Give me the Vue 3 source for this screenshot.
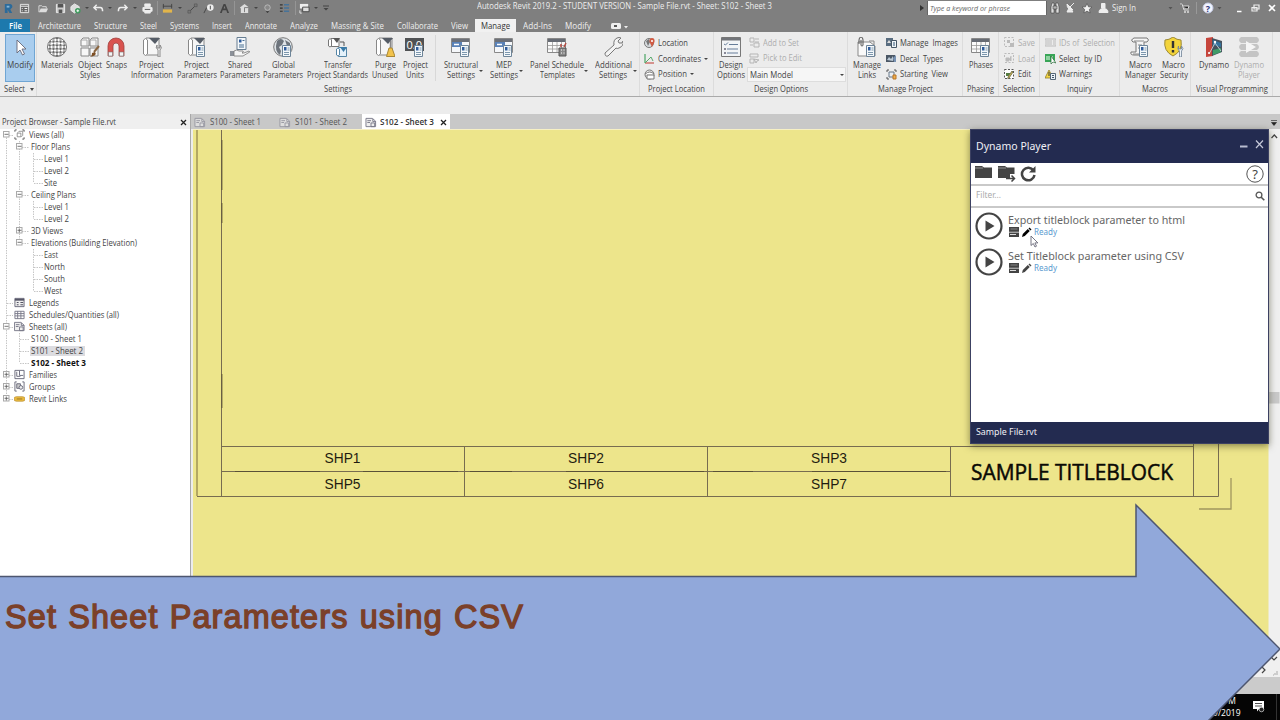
<script setup>
// Condenses or widens a label horizontally so that it fills a given width.
const vFit = {
  mounted(el, { value }) {
    el.style.display = 'inline-block'
    const natural = el.getBoundingClientRect().width
    el.style.width = natural + 'px'
    el.style.marginRight = value - natural + 'px'
    el.style.transform = `scaleX(${value / natural})`
  },
}

const doc = '<path d="M9.500 8.500h8v11h-8z" fill="#f4f8fb" stroke="#6d8498"/><path d="M11 10h2.500v3.500H11z" fill="#2f5c9c"/><path d="M14.500 11h2M14.500 13h2M11 15.500h5M11 17.500h5" stroke="#5d7d99" stroke-width=".8"/>'
const roll = '<path d="M4 1h13v17H4z" fill="#f6f6f6" stroke="#888"/><path d="M1.500 3q2-3 4 0v14q-2 3-4 0z" fill="#fff" stroke="#888"/><path d="M7 1h11l-5 6z" fill="#555c66"/>'
const windowIcon = '<path d="M.5 1.500h18v14H.5z" fill="#f5f7fa" stroke="#888"/><path d="M1 2h17v3H1z" fill="#6c7078"/><path d="M1 5h10v5H1z" fill="#5a82b8"/><path d="M3 7.500h5" stroke="#fff" stroke-width="1.500"/>'
const tableIcon = '<path d="M.5 1.500h18v14H.5z" fill="#fafafa" stroke="#888"/><path d="M1 2h17v3H1z" fill="#666b74"/><path d="M1 8.500h17M1 12h17M5.500 5v10M10 5v10M14.500 5v10" stroke="#999" stroke-width=".8"/>'
const big = {
  modify: '<path d="M7 3v13l3-3 2.500 5 2-1-2.500-5h4z" fill="#fff" stroke="#667" stroke-width=".9"/>',
  materials: '<defs><pattern id="ck" width="5" height="5" patternUnits="userSpaceOnUse" patternTransform="rotate(45 10 10)"><rect width="5" height="5" fill="#fff"/><path d="M0 0h2.500v2.500H0zM2.500 2.500H5V5H2.500z" fill="#6b6b6b"/></pattern></defs><circle cx="10" cy="10" r="9.500" fill="url(#ck)" stroke="#777"/><path d="M3 8q6-5 14 0" stroke="#fff" fill="none" opacity=".5"/>',
  object: '<path d="M1 3l2-2h6v8H1zM10 3l2-2h6v8h-8zM1 11h8v8H1zM10 11h8v8h-8z" fill="#f7f7f7" stroke="#888"/><path d="M1 3h6v6M10 3h6v6" fill="none" stroke="#aaa"/><path d="M19 9l-5 6" stroke="#8a6540" stroke-width="2"/><path d="M9 20q3 0 3-4l3-1q3 4-6 5z" fill="#7c4e24"/>',
  snaps: '<path d="M2 19V9a8 8 0 0 1 16 0v10h-5V9a3 3 0 0 0-6 0v10z" fill="#d9534f" stroke="#9f4440" stroke-width=".8"/><path d="M2.500 15h4v4h-4zM13.500 15h4v4h-4z" fill="#f4f4f4" stroke="#777" stroke-width=".6"/>',
  info: roll + '<path d="M16 20v-7q-3-2-1-5v3h3V8q3 3 0 5v7z" fill="#eee" stroke="#777" stroke-width=".8"/>',
  params: roll + doc,
  shared: '<path d="M7 .5h9v12H7z" fill="#f4f8fb" stroke="#667d92"/><path d="M9 2.500h2.500v3H9z" fill="#2f5c9c"/><path d="M12.500 3.500h2M9 8h5M9 10h5" stroke="#345d85" stroke-width=".9"/><path d="M0 14h4v5H0z" fill="#8c9199"/><path d="M4 14q3-2 5 0h4q1 1-1 2h2l5-2q2 1-1 2l-5 3H4z" fill="#f5f5f5" stroke="#777" stroke-width=".8"/>',
  global: '<circle cx="10" cy="10" r="9.300" fill="#dfe4e8" stroke="#777"/><path d="M4 4q4-4 7 0l-2 4-3 2 2 4-1 4q-6-4-3-14zM12 3l5 3v6l-3-3z" fill="#6d747c"/>' + doc,
  transfer: '<path d="M3 1.500h8v8H3z" fill="#fff" stroke="#777"/><path d="M5 1h7l-3 5z" fill="#555"/><path d="M12 5h4v4" fill="none" stroke="#555"/><path d="M10.500 10.500h8v9h-8z" fill="#e4f1fa" stroke="#5485a6"/><path d="M12 10h7l-3.500 5z" fill="#3b7ba8"/><path d="M8.500 12q1.500-2 3 0v6q-1.500 2-3 0z" fill="#fff" stroke="#5485a6"/><path d="M.5 3q1.500-3 3 0v6q-1.500 2-3 0z" fill="#fff" stroke="#777"/>',
  purge: roll + '<path d="M15.500 4v8" stroke="#888" stroke-width="1.500"/><path d="M14 11h3l3 8.500h-8.500z" fill="#f2c34c" stroke="#a88735"/>',
  units: '<path d="M0 1h19v13H0z" fill="#505254"/><text x="1.500" y="11.500" font-size="11" fill="#fff" font-family="Open Sans,sans-serif">0.0</text>' + doc,
  structural: windowIcon + doc,
  mep: windowIcon + doc,
  panel: tableIcon + '<path d="M12 11h7v8h-7z" fill="#888" stroke="#555"/><path d="M14 10V7M17 10l2-4" stroke="#b64b42" stroke-width="1.500"/><path d="M14 13h1M16.500 13h1M14 16h1M16.500 16h1" stroke="#fff"/>',
  wrench: '<path d="M2 16L11 8q-1-5 3-7 2-1 4 0l-3 3 1 2 3 0 1-2q1 5-4 7-2 1-3 0L5 19q-3 1-3-3z" fill="#f3f3f3" stroke="#777"/>',
  options: '<path d="M.5.5h19v19H.5z" fill="#f2f4f6" stroke="#777"/><path d="M1 1h18v2.500H1z" fill="#72757a"/><path d="M3 7l1.500 1L7 5.500M8 7.500h9M6 12h11M6 16h11" stroke="#667d99" fill="none"/><circle cx="4" cy="12" r="1" fill="#667"/><circle cx="4" cy="16" r="1" fill="#667"/>',
  links: '<path d="M1 5h12l5 4v10H1z" fill="#fafafa" stroke="#888"/><path d="M2 7V3q0-3 2-3t2 3v5q0 1-1 1t-1-1V3" fill="none" stroke="#555"/><path d="M12 4h5v5" fill="none" stroke="#888"/>' + doc,
  phases: tableIcon + doc,
  macro: '<path d="M4 1h13q3 2 0 4h-3v13H4q-4 0-3-3h5V5H3q-3-2 1-4z" fill="#f5f5f5" stroke="#777"/><path d="M4 4h10M8 8h4M8 11h4M3 17h9" stroke="#888"/>' + doc,
  security: '<path d="M9 0q4 3 8 3 2 11-8 16Q-1 14 1 3q4 0 8-3z" fill="#f3d43b" stroke="#9d8a38"/><path d="M9 4v7M9 13v2.500" stroke="#333" stroke-width="2.400"/><path d="M15.500 20v-6q-3-2-1-5v3h3V9q3 3 0 5v6z" fill="#edf3f8" stroke="#6f8295" stroke-width=".8"/>',
  dynamo: '<path d="M2 1l7-1v19l-7 1z" fill="#c6453c"/><path d="M8 1l10 3v11L8 19z" fill="#46525e"/><path d="M9 13l8-2v4l-8 3z" fill="#3f9b67"/><path d="M9 3l8 3v4l-8-2z" fill="#34719c"/><path d="M5 17L11 6l6 8" fill="none" stroke="#d6dee4" stroke-width=".8"/><circle cx="11" cy="5" r="1.200" fill="#fff"/><circle cx="5" cy="16" r="1" fill="#fff"/>',
  player: '<path d="M2 0h16q4 3 0 6H2q-4-3 0-6zM2 7h16q4 3 0 6H2q-4-3 0-6zM2 14h16q4 3 0 6H2q-4-3 0-6z" fill="#c4c4c4"/><path d="M7 4l10 6-10 6z" fill="#f5f5f5"/>',
}

const small = {
  location: '<circle cx="5" cy="6" r="4.500" fill="#d9dde0" stroke="#777"/><path d="M2 4l3-2 1 3-2 4z" fill="#777"/><path d="M8 10L5.500 5q-.5-4 2.500-4t2.500 4z" fill="#d05b43"/><circle cx="8" cy="4" r="1" fill="#fff"/>',
  coordinates: '<path d="M1 1v9" stroke="#4aa564" stroke-width="1.200"/><path d="M1 10h9" stroke="#c7574e" stroke-width="1.200"/><path d="M1 10l6-6M7 4l2 4" stroke="#58a86b" fill="none"/>',
  position: '<circle cx="5.500" cy="5.500" r="4.500" fill="#eee" stroke="#777"/><path d="M1 5q5-4 9 0M3 10V6h7v4z" fill="#fff" stroke="#777"/>',
  add: '<path d="M1 1h4v4H1zM6 2h4M6 5h4M5 6h5v4H5zM1 8h3" fill="none" stroke="#b5b5b5"/>',
  pick: '<path d="M1 1h8v3H1zM1 6h4v4H1zM5 6l5 1-2 1-1 2z" fill="none" stroke="#b5b5b5"/>',
  images: '<path d="M0 1h7v8H0z" fill="#596d80"/><path d="M1 6l2-3 2 3z" fill="#ddd"/><path d="M5.500 3.500h5v7h-5z" fill="#eef4f8" stroke="#456"/><path d="M7 6h2M7 8h2" stroke="#357"/>',
  decal: '<path d="M0 2h9v7H0z" fill="#4b5765"/><path d="M1 7l2-3 2 2 2-3v5z" fill="#bac8d5"/><path d="M7 5l3-3v7H8z" fill="#7892b3"/>',
  starting: '<path d="M1 3V1h2M8 1h2v2M1 8v2h2" fill="none" stroke="#555"/><path d="M3 3h5v5H3z" fill="#e9eef3" stroke="#678"/><path d="M7 6h3v4H7z" fill="#efb04e" stroke="#b77226"/>',
  save: '<path d="M.5.500h9v9h-9z" fill="none" stroke="#bbb" stroke-dasharray="2 1.500"/><path d="M3 3h3v3H3zM6 6h4v4H6z" fill="#bbb"/>',
  load: '<path d="M.5 4V.5h9v9h-9" fill="none" stroke="#bbb" stroke-dasharray="2 1.500"/><path d="M2 5h3v3H2zM7 3v5l-2-2" fill="#bbb" stroke="#bbb"/>',
  edit: '<path d="M.5.500h9v9h-9z" fill="#fff" stroke="#555" stroke-dasharray="2 1.500"/><path d="M2 4h4v3H2z" fill="#567d43"/><path d="M9 3L5 9l-1 1v-2l4-6z" fill="#e5c342" stroke="#775"/>',
  ids: '<path d="M0 2h11v7H0zM2 3v5M4 3v5M6 3v5M9 3v5" fill="none" stroke="#bbb"/>',
  select: '<path d="M0 1h10v8H0z" fill="#38a557"/><path d="M2 3v4M4 3v4M7 3v4" stroke="#e4ffe9"/><path d="M6 3v8l2-2 3 1z" fill="#fff" stroke="#286b3a" stroke-width=".7"/>',
  warnings: '<path d="M4 1L0 9h8z" fill="#f6d845" stroke="#8e7b29" stroke-width=".8"/><path d="M4 3v4" stroke="#333"/><path d="M5.500 4.500h5v6h-5z" fill="#eaf1f8" stroke="#567"/><path d="M7 6.500h2M7 8.500h2" stroke="#456"/>',
}

const quick = [
  { w: 16, s: '<path d="M2 1h6q3 1 2 4L8 7l2 4H7L5 7v4H2z" fill="#2c6b9b"/><path d="M4 3h3v2H4z" fill="#84b5d8"/>' },
  { w: 17, s: '<path d="M1.500 1.500h9v9h-9z" fill="#666" stroke="#eee"/><path d="M2 3.500h8M3 6h1M6 6h3M3 8.500h1M6 8.500h3" stroke="#fff"/>' },
  { w: 20, s: '<path d="M1 10V3h3l1 1h4v2" fill="none" stroke="#ddd"/><path d="M3 6h8l-2 4H1z" fill="#ddd"/>' },
  { w: 14, s: '<path d="M1.500 1.500h9v9h-9z" fill="#ccc" stroke="#eee"/><path d="M3 1h6v4H3zM4 7h4v4H4z" fill="#555"/>' },
  { w: 16, s: '<path d="M1 4l4-3 5 3v4L5 11 1 8z" fill="#ddd" stroke="#eee"/><circle cx="8.500" cy="8.500" r="3" fill="#3c985b"/><path d="M7 8.500h3M8.500 7v3" stroke="#fff"/>' },
  { w: 8, c: 1 },
  { w: 15, s: '<path d="M4 2L1 5l3 3M1 5h7q2.500 0 2.500 4" fill="none" stroke="#eee" stroke-width="1.600"/>' },
  { w: 8, c: 1 },
  { w: 17, s: '<path d="M8 2l3 3-3 3M11 5H4Q1.500 5 1.500 9" fill="none" stroke="#eee" stroke-width="1.600"/>' },
  { w: 8, c: 1 },
  { w: 17, s: '<path d="M3 1h6v3H3zM1 5h10v4H1zM3 8h6v3H3z" fill="#eee" stroke="#eee"/><path d="M3 7h6" stroke="#555"/>' },
  { w: 3, b: 1 },
  { w: 17, s: '<path d="M1.500 1v5M10.500 1v5M1 3.500h10" stroke="#444"/><path d="M1 7h10v3.500H1z" fill="#e2b54b"/>' },
  { w: 8, c: 1 },
  { w: 16, s: '<path d="M2 10L10 2" stroke="#444"/><path d="M1 8h3v3H1zM8 1h3v3H8z" fill="#777" stroke="#555" stroke-width=".7"/>' },
  { w: 16, s: '<path d="M1 11L4 5" stroke="#444"/><circle cx="8" cy="5" r="3.600" fill="#eee"/><path d="M8 3v4" stroke="#444"/>' },
  { w: 16, s: '<path d="M1 11L5 1h2l4 10H9L8 8H4l-1 3zM5 6h2L6 3z" fill="#444" fill-rule="evenodd"/>' },
  { w: 5, b: 1 },
  { w: 15, s: '<path d="M1 5l5-4 5 4-1 1v5H2V6z" fill="#ddd"/><path d="M6 5l5 0M6 5v5" stroke="#777"/>' },
  { w: 8, c: 1 },
  { w: 15, s: '<circle cx="6" cy="5" r="3" fill="#888" stroke="#bbb"/><path d="M6 11l-2-2h4z" fill="#333"/>' },
  { w: 18, s: '<path d="M1 2h3M1 5.500h3M1 9h3" stroke="#333" stroke-width="1.300"/><path d="M5.500 2h5.500M5.500 5.500h5.500M5.500 9h5.500" stroke="#46739a" stroke-width="1.600"/>' },
  { w: 4, b: 1 },
  { w: 15, s: '<path d="M1 1h9v5H1z" fill="#eee"/><path d="M4 4.500h7v5H4z" fill="#ddd" stroke="#444"/><path d="M1 8v3h2" fill="none" stroke="#eee"/>' },
  { w: 8, c: 1 },
  { w: 12, c: 2 },
]

const tabs = [['Architecture', 43], ['Structure', 33], ['Steel', 17], ['Systems', 29], ['Insert', 20], ['Annotate', 32], ['Analyze', 28], ['Massing & Site', 53], ['Collaborate', 41], ['View', 17], ['Manage', 29], ['Add-Ins', 29], ['Modify', 26]]

// Button: icon, box width, label lines as [text, width], optional flags.
// caret is the distance of the drop-down arrow from the box's right edge.
const B = (icon, w, lines, o = {}) => ({ icon, w, lines, ...o })
const panels = [
  { w: 37, title: ['Select', 21], cls: 'select', caret: 1, cols: [B('modify', 30, [['Modify', 26]], { cls: 'on' })] },
  { w: 603, title: ['Settings', 28], cols: [
    B('materials', 34, [['Materials', 32]]), B('object', 32, [['Object', 24], ['Styles', 20]]), B('snaps', 20, [['Snaps', 21]]),
    B('info', 51, [['Project', 25], ['Information', 42]]), B('params', 39, [['Project', 25], ['Parameters', 40]]),
    B('shared', 48, [['Shared', 24], ['Parameters', 40]]), B('global', 38, [['Global', 23], ['Parameters', 40]]),
    B('transfer', 71, [['Transfer', 28], ['Project Standards', 61]]), B('purge', 24, [['Purge', 21], ['Unused', 26]]),
    B('units', 36, [['Project', 25], ['Units', 18]]), { line: 1 },
    B('structural', 48, [['Structural', 34], ['Settings', 28]], { caret: 2 }), B('mep', 38, [['MEP', 16], ['Settings', 28]], { caret: 0 }),
    B('panel', 68, [['Panel Schedule', 54], ['Templates', 35]], { caret: 3 }), B('wrench', 44, [['Additional', 37], ['Settings', 28]], { caret: -2 }),
  ] },
  { w: 74, title: ['Project Location', 57], cols: [{ rows: [['location', 'Location', 30], ['coordinates', 'Coordinates', 43, 'c'], ['position', 'Position', 29, 'c']] }] },
  { w: 134, title: ['Design Options', 54], cols: [B('options', 28, [['Design', 24], ['Options', 28]]), { pad: 4, rows: [['add', 'Add to Set', 36, 'off'], ['pick', 'Pick to Edit', 39, 'off'], [null, 'Main Model', 43]] }] },
  { w: 115, title: ['Manage Project', 55], cols: [B('links', 32, [['Manage', 28], ['Links', 18]]), { pad: 3, rows: [['images', 'Manage  Images', 58], ['decal', 'Decal  Types', 43], ['starting', 'Starting  View', 48]] }] },
  { w: 36, title: ['Phasing', 27], cols: [B('phases', 30, [['Phases', 24]])] },
  { w: 41, title: ['Selection', 32], cols: [{ pad: 2, rows: [['save', 'Save', 17, 'off'], ['load', 'Load', 17, 'off'], ['edit', 'Edit', 13]] }] },
  { w: 80, title: ['Inquiry', 25], cols: [{ pad: 2, rows: [['ids', 'IDs of  Selection', 56, 'off'], ['select', 'Select  by ID', 43], ['warnings', 'Warnings', 33]] }] },
  { w: 71, title: ['Macros', 26], cols: [B('macro', 34, [['Macro', 23], ['Manager', 31]]), B('security', 33, [['Macro', 23], ['Security', 28]])] },
  { w: 82, title: ['Visual Programming', 72], cols: [B('dynamo', 40, [['Dynamo', 30]]), B('player', 29, [['Dynamo', 30], ['Player', 22]], { cls: 'off' })] },
]

const treeIcon = {
  views: '<path d="M1 3V1h2M9 1h2v2M1 9v2h2M9 11h2V9" fill="none" stroke="#555"/><path d="M3.500 4.500h4v4h-4zM4 4l1.500-1.500h4V7L8 8.500" fill="none" stroke="#777" stroke-width=".8"/>',
  legend: '<path d="M1 1.500h10v9H1z" fill="#eee" stroke="#667"/><path d="M1 3h10" stroke="#556" stroke-width="2"/><path d="M3 6h2M7 6h3M3 8.500h2M7 8.500h3" stroke="#445"/>',
  schedule: '<path d="M1 2.500h10v8H1zM1 5h10M1 7.500h10M4 2.500v8M7.500 2.500v8" fill="#fff" stroke="#778"/>',
  sheets: '<path d="M.5 1.500h7l3.500 3v6H.5z" fill="#eee" stroke="#778"/><path d="M2 4h4M2 6h3M6 6.500h4v4H6zM8 2v3h3" fill="none" stroke="#778"/>',
  families: '<path d="M1 1.500h10v9H1z" fill="#fff" stroke="#667"/><path d="M6 2v5h4M3 3v5h4" fill="none" stroke="#667"/>',
  groups: '<path d="M3 1H1v10h2M9 1h2v10H9" fill="none" stroke="#667"/><path d="M3 3h4v5H3z" fill="#ccc" stroke="#667"/><circle cx="7.500" cy="7" r="2" fill="#eee" stroke="#667"/>',
  links: '<path d="M2.500 4h7a2.500 2.500 0 0 1 0 5h-7a2.500 2.500 0 0 1 0-5z" fill="#e9b93f" stroke="#b58a2b" stroke-width=".7"/><path d="M3 6.500h6" stroke="#8d6b20" stroke-width=".9"/>',
}
// depth, label, width, expander, icon, class
const tree = [
  [0, 'Views (all)', 35, '-', 'views'], [1, 'Floor Plans', 39, '-'], [2, 'Level 1', 25], [2, 'Level 2', 25], [2, 'Site', 13],
  [1, 'Ceiling Plans', 45, '-'], [2, 'Level 1', 25], [2, 'Level 2', 25], [1, '3D Views', 32, '+'], [1, 'Elevations (Building Elevation)', 106, '-'],
  [2, 'East', 14], [2, 'North', 21], [2, 'South', 21], [2, 'West', 18], [0, 'Legends', 30, '', 'legend'],
  [0, 'Schedules/Quantities (all)', 90, '', 'schedule'], [0, 'Sheets (all)', 38, '-', 'sheets'],
  [1, 'S100 - Sheet 1', 51], [1, 'S101 - Sheet 2', 52, '', '', 'hl'], [1, 'S102 - Sheet 3', 55, '', '', 'bold'],
  [0, 'Families', 28, '+', 'families'], [0, 'Groups', 26, '+', 'groups'], [0, 'Revit Links', 38, '+', 'links'],
]

const docs = [['S100 - Sheet 1', 51], ['S101 - Sheet 2', 52], ['S102 - Sheet 3', 54]]
const scripts = [['Export titleblock parameter to html', 177], ['Set Titleblock parameter using CSV', 176]]
const cells = [['SHP1', 342.5, 463], ['SHP2', 586, 463], ['SHP3', 829, 463], ['SHP5', 342.5, 488.5], ['SHP6', 586, 488.5], ['SHP7', 829, 488.5]]
</script>

<template>
  <div class="screen">
    <header class="top">
      <div class="titlebar">
        <div class="quick">
          <span v-for="(q, i) in quick" :key="i" class="q" :style="{ width: q.w + 'px' }">
            <svg v-if="q.s" width="11" height="11" viewBox="0 0 12 12" v-html="q.s"></svg>
            <svg v-else-if="q.c === 2" width="6" height="6"><path d="M0 1h6" stroke="#444" /><path d="M.5 3h5L3 5.500z" fill="#444" /></svg>
            <i v-else-if="q.c" class="caret"></i>
            <i v-else class="qbar"></i>
          </span>
        </div>
        <div class="title"><span v-fit="295">Autodesk Revit 2019.2 - STUDENT VERSION - Sample File.rvt - Sheet: S102 - Sheet 3</span></div>
        <div class="account">
          <svg class="play" width="4" height="6"><path d="M0 0l4 3-4 3z" fill="#333" /></svg>
          <div class="search"><span v-fit="80">Type a keyword or phrase</span></div>
          <svg width="231" height="17" viewBox="1049 0 231 17">
            <path d="M1051 13V7l1-4h2v10zM1056 13V3h2l1 4v6zM1053 6h4v3h-4z" fill="#ddd" stroke="#333" stroke-width=".5" />
            <path d="M1067 4q0 6 6 6zM1069 8l-2 4h6l-3-4M1070 7l4-4" fill="#e8e8e8" stroke="#eee" />
            <path d="M1087 3.500l1.500 3.300 3.500.3-2.700 2.300.8 3.600-3.100-1.900-3.100 1.900.8-3.600-2.700-2.300 3.500-.3z" fill="#f1f1f1" stroke="#444" stroke-width=".6" />
            <path d="M1101.500 3.500h3.500v4.500h-3.500zM1099 12.500q0-4 4.500-4t4.500 4z" fill="#eee" stroke="#eee" />
            <path d="M1168.500 7h4l-2 2.500zM1217.500 7h4l-2 2.500z" fill="#555" />
            <path d="M1180 4h2l2 6h5M1183 6h6l-1 3h-4" fill="#222" stroke="#ddd" />
            <circle cx="1185" cy="12" r="1" fill="#ddd" /><circle cx="1188" cy="12" r="1" fill="#ddd" />
            <path d="M1196.500 2v12" stroke="#999" />
            <circle cx="1208" cy="8" r="5" fill="#f3f5ff" stroke="#c4cbe4" />
            <text x="1208" y="11.500" text-anchor="middle" font-size="9" font-weight="bold" fill="#303878">?</text>
            <path d="M1237 11.500h4.500" stroke="#fff" stroke-width="1.500" />
            <path d="M1254 5h5v4h-5zM1252 7.500h5v3.500h-5z" fill="#7f7f7f" stroke="#eee" stroke-width="1.200" />
            <path d="M1269 5l6 6M1275 5l-6 6" stroke="#fff" stroke-width="1.600" />
          </svg>
          <div class="signin"><span v-fit="24">Sign In</span></div>
        </div>
      </div>
      <nav class="tabs">
        <div class="file"><span v-fit="13">File</span></div>
        <div v-for="t in tabs" :key="t[0]" class="tab" :class="{ active: t[0] === 'Manage' }"><span v-fit="t[1]">{{ t[0] }}</span></div>
        <svg class="camera" width="18" height="8"><rect y="1" width="10" height="6" rx="1.500" fill="#eee" /><path d="M3 4h3" stroke="#555" stroke-width="2" /><path d="M13 4h4l-2 2.500z" fill="#eee" /></svg>
      </nav>
    </header>

    <section class="ribbon">
      <div v-for="p in panels" :key="p.title[0]" class="panel" :class="p.cls" :style="{ width: p.w + 'px' }">
        <div class="body">
          <template v-for="(c, i) in p.cols" :key="i">
            <i v-if="c.line" class="split"></i>
            <div v-else-if="c.rows" class="rows" :style="{ paddingLeft: (c.pad || 1) + 'px' }">
              <div v-for="r in c.rows" :key="r[1]" class="row" :class="[r[3], { combo: !r[0] }]">
                <svg v-if="r[0]" width="11" height="11" viewBox="0 0 11 11" v-html="small[r[0]]"></svg>
                <span v-fit="r[2]">{{ r[1] }}</span>
                <i v-if="!r[0] || r[3] === 'c'" class="caret"></i>
              </div>
            </div>
            <div v-else class="btn" :class="c.cls" :style="{ width: c.w + 'px' }">
              <svg width="20" height="20" viewBox="0 0 20 20" v-html="big[c.icon]"></svg>
              <span v-for="l in c.lines" :key="l[0]" v-fit="l[1]">{{ l[0] }}</span>
              <i v-if="c.caret !== undefined" class="caret" :style="{ right: c.caret + 'px' }"></i>
            </div>
          </template>
        </div>
        <div class="ptitle"><span v-fit="p.title[1]">{{ p.title[0] }}</span><i v-if="p.caret" class="caret"></i></div>
      </div>
    </section>
    <div class="optionbar"></div>

    <div class="work">
      <aside class="browser">
        <div class="bhead">
          <span v-fit="114">Project Browser - Sample File.rvt</span>
          <svg width="7" height="7"><path d="M1 1l5 5M6 1L1 6" stroke="#222" stroke-width="1.300" /></svg>
        </div>
        <div class="tree">
          <svg class="guides" width="60" height="275"><path d="M6.500 6v264M19.500 12v102M33.500 24v30M33.500 72v18M33.500 120v42M19.500 204v30M9 6.500h5M22 18.500h7M34 30.500h9M34 42.500h9M34 54.500h9M22 66.500h7M34 78.500h9M34 90.500h9M22 102.500h7M22 114.500h7M34 126.500h9M34 138.500h9M34 150.500h9M34 162.500h9M7 174.500h6M7 186.500h6M9 198.500h5M20 210.500h9M20 222.500h9M20 234.500h9M9 246.500h5M9 258.500h5M9 270.500h5" stroke="#c6c6c6" fill="none" stroke-dasharray="1.500 1" /></svg>
          <div v-for="(n, i) in tree" :key="i" class="node" :class="['d' + n[0], n[5]]">
            <span class="exp"><svg v-if="n[3]" width="7" height="7"><rect x=".5" y=".5" width="5.500" height="5.500" fill="#fff" stroke="#aaa" /><path :d="n[3] === '+' ? 'M1.500 3.300h4M3.300 1.500v4' : 'M1.500 3.300h4'" stroke="#555" stroke-width=".8" /></svg></span>
            <svg v-if="n[4]" class="nicon" width="11" height="11" viewBox="0 0 12 12" v-html="treeIcon[n[4]]"></svg>
            <div class="nlabel"><span v-fit="n[2]">{{ n[1] }}</span></div>
          </div>
        </div>
      </aside>

      <main class="view">
        <div class="doctabs">
          <div v-for="(d, i) in docs" :key="i" class="doctab" :class="{ current: i === 2 }">
            <svg width="12" height="11" viewBox="0 0 12 12" v-html="treeIcon.sheets"></svg>
            <span v-fit="d[1]">{{ d[0] }}</span>
            <svg v-if="i === 2" class="x" width="7" height="7"><path d="M1 1l5 5M6 1L1 6" stroke="#222" stroke-width="1.300" /></svg>
          </div>
          <svg class="more" width="6" height="6"><path d="M0 .5h6M.5 2.500h5l-2.500 3z" fill="#222" stroke="#222" stroke-width=".6" /></svg>
        </div>
        <svg class="sheet" width="1087" height="591" viewBox="193 129 1087 591">
          <path d="M193 129h1076v549H193z" fill="#ede58b" />
          <path d="M193 129.500h1076" stroke="#f7f0c4" />
          <path d="M197 130v366" stroke="#a99e5c" stroke-width="1.700" />
          <path d="M221.500 130v366M197 496.500h1021.500V440M221 446.500h973M221 471.500h730M464.500 446v50M707.500 446v50M950.500 446v50M1193.500 440v56" stroke="#776c50" fill="none" />
          <path d="M235 471.500h85M363 471.500h95M470 471.500h42M566 471.500h138M713 471.500h40M812 471.500h134M222 140v50M222 203v20M222 374v34" stroke="#4d462c" stroke-width=".7" />
          <path d="M1231 478v31h-32" stroke="#a0965f" fill="none" stroke-width="1.300" />
          <text v-for="c in cells" :key="c[0]" :x="c[1]" :y="c[2]" text-anchor="middle" class="shp" textLength="36" lengthAdjust="spacingAndGlyphs">{{ c[0] }}</text>
          <text x="971" y="480" class="sample" textLength="202" lengthAdjust="spacingAndGlyphs">SAMPLE TITLEBLOCK</text>
          <path d="M1268.500 129H1280v549h-11.500z" fill="#f0f0f0" />
          <path d="M1271.500 138l2.800-3 2.800 3" fill="none" stroke="#444" stroke-width="1.200" />
          <path d="M1269 392h10.500v11.500H1269z" fill="#c9c9c9" />
          <path d="M1225 642h55v36h-55z" fill="#f0f0f0" />
          <path d="M1271 657l3 3 3-3M1262 667l3 3-3 3" fill="none" stroke="#444" stroke-width="1.200" />
          <path d="M1273 675h1M1275 673v2M1277 671v4" stroke="#aaa" />
          <path d="M1160 677h120v17h-120z" fill="#cbcbcb" />
          <path d="M1160 694h120v26h-120z" fill="#050505" />
          <path d="M1276.500 694v26" stroke="#333" />
          <text x="1236" y="704" text-anchor="end" class="clock">PM</text>
          <text x="1240.500" y="716" text-anchor="end" class="clock">7/19/2019</text>
          <path d="M1253 701h11v8h-5l-2 2.500V709h-4z" fill="#fff" />
          <path d="M1255 703.500h7M1255 706h7" stroke="#222" stroke-width=".8" />
          <circle cx="1261.500" cy="709.500" r="2.300" fill="#222" stroke="#ddd" stroke-width=".7" />
        </svg>
      </main>
    </div>

    <section class="player">
      <div class="phead">
        <span v-fit="75">Dynamo Player</span>
        <svg width="25" height="12"><path d="M1 7.500h7.500" stroke="#b9bdd0" stroke-width="2" /><path d="M17 1.500l7 7.500M24 1.500L17 9" stroke="#c5c8d8" stroke-width="1.200" /></svg>
      </div>
      <div class="ptools">
        <svg width="62" height="17" viewBox="0 0 62 17">
          <path d="M0 1h7l2 1.500h8V13H0zM23 1h7l2 1.500h7.500V9H35v4H23z" fill="#444" />
          <path d="M0 3h8M23 3h8" stroke="#ccc" stroke-width=".6" />
          <path d="M31 13.500h8M36.500 10.500l3 3-3 3" fill="none" stroke="#444" stroke-width="1.500" />
          <path d="M58.500 5.500a6.300 6.300 0 1 0 1 4.500" fill="none" stroke="#444" stroke-width="2.500" /><path d="M60.500 1v6.500H54z" fill="#444" />
        </svg>
        <svg width="18" height="18"><circle cx="9" cy="9" r="8.200" fill="#fff" stroke="#555" /><text x="9" y="13.500" text-anchor="middle" font-size="13" fill="#444">?</text></svg>
      </div>
      <div class="pfilter">
        <span v-fit="25">Filter...</span>
        <svg width="10" height="10"><circle cx="4" cy="4" r="2.900" fill="none" stroke="#555" stroke-width="1.300" /><path d="M6 6l3.300 3.300" stroke="#555" stroke-width="1.600" /></svg>
      </div>
      <div class="plist">
        <div v-for="(s, i) in scripts" :key="i" class="script">
          <svg width="28" height="28"><circle cx="14" cy="14" r="12.500" fill="#fff" stroke="#444" stroke-width="2.200" /><path d="M10.500 8.500l9 5.500-9 5.500z" fill="#444" /></svg>
          <div class="stext">
            <span v-fit="s[1]" class="sname">{{ s[0] }}</span>
            <div class="sstat">
              <svg width="24" height="11"><path d="M1 0h10v4.800H1z" fill="#444" /><path d="M2.500 2h7" stroke="#999" stroke-width=".8" /><path d="M1 5.500h10v4.500H1z" fill="#444" /><path d="M2 7.500h6" stroke="#ddd" /><path d="M14 10l.8-3 5-5 2 2-5 5zM20.500 1.500l1-1 2 2-1 1z" :fill="i ? '#444' : '#000'" /></svg>
              <span v-fit="23">Ready</span>
            </div>
          </div>
        </div>
      </div>
      <div class="pfoot"><span v-fit="61">Sample File.rvt</span></div>
    </section>

    <svg class="pointer" width="9" height="13"><path d="M1 1v9.500l2.300-2 1.700 3.500 1.500-.8-1.600-3.300h3z" fill="#fff" stroke="#667" stroke-width=".9" /></svg>

    <div class="banner">
      <svg width="1280" height="218" viewBox="0 502 1280 218">
        <path d="M-3 576.500H1136V505L1280 649 1208 721H-3z" fill="#91a8da" stroke="#4d5670" stroke-width="1.500" />
      </svg>
      <div class="caption"><span v-fit="519">Set Sheet Parameters using CSV</span></div>
    </div>
  </div>
</template>

<style>
html, body { margin: 0; overflow: hidden; }
</style>

<style scoped>
.screen { position: relative; width: 1280px; height: 720px; overflow: hidden; background: #ececec; font: 8.6px/10px "Open Sans", "Noto Sans", sans-serif; color: #444; white-space: pre; }
.screen span { white-space: pre; transform-origin: 0 50%; flex: none; }
svg { display: block; flex: none; }
.caret { width: 0; height: 0; border: 2px solid transparent; border-top: 2.5px solid #444; border-bottom: 0; flex: none; }
.top { height: 32px; background: #7f7f7f; color: #eee; }
.titlebar { display: flex; height: 18px; position: relative; }
.quick { display: flex; align-items: center; height: 16px; width: 477px; }
.q { display: flex; justify-content: center; align-items: center; flex: none; }
.qbar { width: 1px; height: 14px; background: #959595; }
.title { flex: 1; line-height: 13px; }
.account { display: flex; align-items: flex-start; position: relative; }
.play { margin: 5px 3px 0 0; }
.search { width: 120px; height: 14px; margin-top: 1px; margin-right: 2px; background: #fff; color: #666; font-style: italic; font-size: 8px; line-height: 14px; box-sizing: border-box; padding-left: 2px; border: 1px solid #666; border-width: 0 1px; }
.signin { position: absolute; left: 192px; top: 3px; }
.tabs { display: flex; height: 14px; gap: 13px; align-items: stretch; line-height: 16px; }
.file { width: 30px; text-align: center; background: #1d79ad; margin-right: -5px; margin-top: 1px; line-height: 14px; color: #fff; font-weight: 600; }
.active { background: #f1f1f1; color: #333; margin: 1px -6px 0; padding: 0 6px; line-height: 14px; }
.camera { margin: 4px 0 0 7px; }
.ribbon { display: flex; height: 64px; background: #ececec; border-bottom: 1px solid #aaa; }
.panel { display: flex; flex-direction: column; flex: none; box-sizing: border-box; border-right: 1px solid #dcdcdc; }
.body { display: flex; height: 50px; padding: 3px 0 0 3px; box-sizing: border-box; }
.ptitle { display: flex; justify-content: center; align-items: center; gap: 5px; height: 14px; }
.select .body { padding: 2px 0 0 5px; }
.select .ptitle { justify-content: flex-start; padding-left: 4px; }
.select .ptitle .caret { border-width: 3px 2.5px 0; }
.btn { display: flex; flex-direction: column; align-items: center; position: relative; flex: none; padding-top: 2px; box-sizing: border-box; height: 47px; }
.btn > svg { margin-bottom: 3px; }
.btn > span { line-height: 10px; }
.btn .caret { position: absolute; top: 35px; }
.on { background: #a9cdee; border: 1px solid #6fa5d3; padding-top: 2px; height: 48px; width: 30px; }
.off { color: #adadad; }
.split { width: 1px; height: 46px; margin: 0 1.5px; background: #d8d8d8; }
.rows { display: flex; flex-direction: column; flex: 1; }
.row { display: flex; align-items: center; gap: 3px; height: 16px; }
.combo { background: #f6f6f6; border: 1px solid #ddd; height: 13px; margin-top: 1px; padding: 0 1px 0 2px; justify-content: space-between; margin-left: -2px; margin-right: 1px; }
.optionbar { height: 17px; background: #ececec; }
.work { display: flex; height: 606px; }
.browser { width: 190px; background: #fff; border-right: 1px solid #a9a9a9; }
.bhead { display: flex; justify-content: space-between; align-items: center; height: 15px; padding: 1px 3px 0 2px; box-sizing: border-box; background: #efefef; }
.tree { position: relative; }
.guides { position: absolute; left: 0; top: 0; }
.node { display: flex; align-items: center; height: 12px; position: relative; top: -.5px; color: #444; }
.exp { width: 7px; height: 7px; }
.d0 { padding-left: 3px; }
.d1 { padding-left: 16px; }
.d2 { padding-left: 28px; }
.nicon { margin: 0 4px; }
.nlabel { display: flex; }
.d1 .nlabel { margin-left: 8px; }
.d2 .nlabel { margin-left: 9px; }
.hl .nlabel { background: #dcdce0; box-shadow: -1px 0 #dcdce0, 2px 0 #dcdce0; }
.bold .nlabel { font-weight: 700; color: #111; }
.view { width: 1089px; }
.doctabs { display: flex; height: 15px; background: #c8c8c8; padding-left: 3px; align-items: stretch; }
.doctab { display: flex; align-items: center; width: 85px; gap: 4px; padding-top: 1px; box-sizing: border-box; color: #555; }
.doctab svg { opacity: .6; }
.doctab.current { background: #fff; width: 88px; margin-left: -2px; padding-left: 3px; font-weight: 600; color: #333; gap: 3px; }
.doctab.current svg { opacity: 1; }
.x { margin-left: 3px; }
.more { margin: 6px 3px 0 auto; }
.sheet { margin-left: 2px; }
.shp { font: 14.5px "Liberation Sans", Arial, sans-serif; fill: #1f1c10; }
.sample { font: 22px "Open Sans", sans-serif; fill: #0a0a05; stroke: #0a0a05; stroke-width: .5; }
.clock { font: 8.5px "Open Sans", sans-serif; fill: #fff; }
.player { position: absolute; left: 970px; top: 129px; width: 299px; height: 315px; display: flex; flex-direction: column; background: #fff; box-shadow: 0 2px 7px rgba(50, 50, 20, .55); border: 1px solid #3c4162; box-sizing: border-box; font-family: "Noto Sans", sans-serif; }
.phead { display: flex; justify-content: space-between; background: #232b50; color: #f0f0f5; height: 33px; font-size: 11.5px; line-height: 31px; padding: 0 4px 0 5px; }
.phead svg { margin-top: 9px; }
.ptools { display: flex; justify-content: space-between; align-items: center; height: 21px; padding: 0 4px; border-bottom: 2px solid #c9c9c9; }
.pfilter { display: flex; justify-content: space-between; align-items: center; height: 20px; padding: 0 3px 0 5px; border-bottom: 2px solid #c9c9c9; color: #aaa; }
.pfilter span { margin-top: -2px; }
.plist { flex: 1; padding: 4px 4px 0; }
.script { display: flex; height: 36px; }
.stext { padding: 0 0 0 5px; display: flex; flex-direction: column; align-items: flex-start; }
.sname { font-size: 11.3px; line-height: 15px; color: #666; }
.sstat { display: flex; gap: 2px; line-height: 11px; color: #5b9bd0; }
.pfoot { height: 21px; line-height: 21px; background: #232b50; color: #f0f0f5; padding-left: 5px; }
.pointer { position: absolute; left: 1030px; top: 235px; }
.banner { position: absolute; left: 0; top: 502px; width: 1280px; height: 218px; }
.caption { position: absolute; left: 5px; top: 94px; font: 400 34px/40px "Liberation Sans", Arial, sans-serif; color: #7b4029; letter-spacing: 1.2px; word-spacing: 1px; -webkit-text-stroke: 1.4px #7b4029; }
</style>
